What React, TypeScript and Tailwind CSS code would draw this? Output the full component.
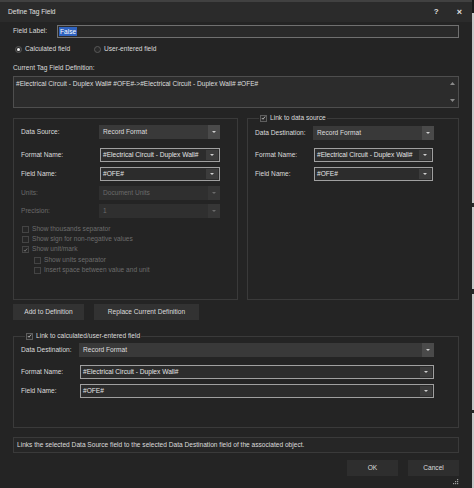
import React from "react";

const F = "font-['Liberation_Sans',Arial,sans-serif] text-[6.6px] leading-none";

function Arrow({ dim = false }: { dim?: boolean }) {
  return (
    <svg width="4" height="2" viewBox="0 0 4 2">
      <polygon points="0,0 4,0 2,2" fill={dim ? "#6a6a6a" : "#cfcfcf"} />
    </svg>
  );
}

function Select({
  text,
  kind,
  className = "",
}: {
  text: string;
  kind: "flat" | "border" | "disabled";
  className?: string;
}) {
  if (kind === "flat")
    return (
      <div className={`flex bg-[#393939] ${className}`}>
        <span className="flex-1 flex items-center px-[4px] text-[#dedede]">{text}</span>
        <span className="w-[12px] bg-[#4a4a4a] flex items-center justify-center">
          <Arrow />
        </span>
      </div>
    );
  if (kind === "disabled")
    return (
      <div className={`flex bg-[#2f2f2f] ${className}`}>
        <span className="flex-1 flex items-center px-[4px] text-[#6a6a6a]">{text}</span>
        <span className="w-[12px] bg-[#363636] flex items-center justify-center">
          <Arrow dim />
        </span>
      </div>
    );
  return (
    <div className={`flex border border-[#a0a0a0] bg-[#2c2c2c] p-[1px] ${className}`}>
      <span className="flex-1 flex items-center px-[1px] text-[#e4e4e4]">{text}</span>
      <span className="w-[12px] bg-[#3c3c3c] flex items-center justify-center">
        <Arrow />
      </span>
    </div>
  );
}

function Check({
  label,
  checked = false,
  dim = false,
  className = "",
}: {
  label: string;
  checked?: boolean;
  dim?: boolean;
  className?: string;
}) {
  return (
    <div className={`flex items-center gap-[3px] ${className}`}>
      <span
        className={`w-[7px] h-[7px] border flex items-center justify-center ${
          dim ? "border-[#444444] bg-[#262626]" : "border-[#5e5e5e] bg-[#2a2a2a]"
        }`}
      >
        {checked && (
          <svg width="6" height="6" viewBox="0 0 6 6">
            <polyline
              points="1,3 2.4,4.5 5,1.2"
              fill="none"
              stroke={dim ? "#8a8a8a" : "#dcdcdc"}
              strokeWidth="0.9"
            />
          </svg>
        )}
      </span>
      <span className={dim ? "text-[#6c6c6c]" : "text-[#dcdcdc]"}>{label}</span>
    </div>
  );
}

function Radio({ label, checked }: { label: string; checked?: boolean }) {
  return (
    <div className="flex items-center gap-[3px]">
      <span className="w-[7px] h-[7px] rounded-full border border-[#5a5a5a] bg-[#2a2a2a] flex items-center justify-center">
        {checked && <span className="w-[3px] h-[3px] rounded-full bg-[#f0f0f0]" />}
      </span>
      <span className="text-[#dcdcdc]">{label}</span>
    </div>
  );
}

function Row({
  label,
  labelW,
  dim = false,
  className = "",
  children,
}: {
  label: string;
  labelW: string;
  dim?: boolean;
  className?: string;
  children: React.ReactNode;
}) {
  return (
    <div className={`flex items-stretch ${className}`}>
      <span className={`${labelW} flex items-center ${dim ? "text-[#6a6a6a]" : "text-[#dcdcdc]"}`}>
        {label}
      </span>
      {children}
    </div>
  );
}

export default function App() {
  return (
    <div className={`w-[474px] h-[488px] flex bg-[#1c1c1c] ${F}`}>
      <div className="w-[472px] h-full flex flex-col bg-[#242424] border-t-2 border-[#414141]">
        {/* title bar */}
        <div className="h-[20px] shrink-0 flex items-center bg-[#2b2b2b] pl-[8px] pr-[10px] text-[#e0e0e0]">
          <span className="flex-1">Define Tag Field</span>
          <span className="font-bold text-[8px] w-[23px]">?</span>
          <span className="font-bold text-[9px]">×</span>
        </div>

        <div className="flex flex-col px-[13px] pr-[13px]">
          {/* field label */}
          <div className="mt-[3px] h-[13px] flex items-stretch">
            <span className="w-[44px] flex items-center text-[#dcdcdc]">Field Label:</span>
            <div className="flex-1 border border-[#707070] bg-[#2a2a2a] flex items-center px-[1px]">
              <span className="bg-[#2f63c0] text-white px-[1px] leading-[9px]">False</span>
            </div>
          </div>

          {/* radios */}
          <div className="mt-[6px] h-[10px] flex items-center pl-[2px]">
            <div className="w-[79px]">
              <Radio label="Calculated field" checked />
            </div>
            <Radio label="User-entered field" />
          </div>

          <div className="mt-[9px] h-[10px] flex items-center text-[#dcdcdc]">
            Current Tag Field Definition:
          </div>

          {/* textarea */}
          <div className="mt-[3px] h-[32px] flex border border-[#4e4e4e] bg-[#2c2c2c]">
            <div className="flex-1 px-[2px] pt-[4px] text-[#dedede]">
              #Electrical Circuit - Duplex Wall# #OFE#-&gt;#Electrical Circuit - Duplex Wall# #OFE#
            </div>
            <div className="w-[11px] flex flex-col items-center justify-between py-[5px]">
              <svg width="5" height="3" viewBox="0 0 5 3">
                <polygon points="0,3 5,3 2.5,0" fill="#8a8a8a" />
              </svg>
              <svg width="5" height="3" viewBox="0 0 5 3">
                <polygon points="0,0 5,0 2.5,3" fill="#8a8a8a" />
              </svg>
            </div>
          </div>

          {/* groups */}
          <div className="mt-[5px] h-[187px] flex gap-[9px]">
            <div className="mt-[5px] w-[225px] h-[182px] border border-[#3a3a3a] pl-[7px] pt-[6px] flex flex-col">
              <Row label="Data Source:" labelW="w-[78px]" className="h-[14px]">
                <Select text="Record Format" kind="flat" className="w-[121px]" />
              </Row>
              <Row label="Format Name:" labelW="w-[79px]" className="mt-[9px] h-[14px]">
                <Select text="#Electrical Circuit - Duplex Wall#" kind="border" className="w-[120px]" />
              </Row>
              <Row label="Field Name:" labelW="w-[79px]" className="mt-[5px] h-[14px]">
                <Select text="#OFE#" kind="border" className="w-[120px]" />
              </Row>
              <Row label="Units:" labelW="w-[78px]" dim className="mt-[5px] h-[14px]">
                <Select text="Document Units" kind="disabled" className="w-[121px]" />
              </Row>
              <Row label="Precision:" labelW="w-[78px]" dim className="mt-[4px] h-[14px]">
                <Select text="1" kind="disabled" className="w-[121px]" />
              </Row>
              <div className="mt-[6px] flex flex-col pl-[1px]">
                <Check label="Show thousands separator" dim className="h-[10.3px]" />
                <Check label="Show sign for non-negative values" dim className="h-[10.3px]" />
                <Check label="Show unit/mark" checked dim className="h-[10.3px]" />
                <Check label="Show units separator" dim className="h-[10.3px] pl-[12px]" />
                <Check label="Insert space between value and unit" dim className="h-[10.3px] pl-[12px]" />
              </div>
            </div>

            <fieldset className="w-[212px] h-[187px] border border-[#3a3a3a] pl-[7px] m-0 p-0 flex flex-col">
              <legend className="ml-[4px] px-[1px] h-[10px] flex items-center">
                <Check label="Link to data source" checked />
              </legend>
              <Row label="Data Destination:" labelW="w-[58px]" className="mt-[3px] h-[14px]">
                <Select text="Record Format" kind="flat" className="w-[121px]" />
              </Row>
              <Row label="Format Name:" labelW="w-[59px]" className="mt-[8px] h-[14px]">
                <Select text="#Electrical Circuit - Duplex Wall#" kind="border" className="w-[119px]" />
              </Row>
              <Row label="Field Name:" labelW="w-[59px]" className="mt-[5px] h-[14px]">
                <Select text="#OFE#" kind="border" className="w-[119px]" />
              </Row>
            </fieldset>
          </div>

          {/* buttons */}
          <div className="mt-[4px] h-[16px] flex gap-[10px] text-[#dcdcdc]">
            <div className="w-[71px] bg-[#323232] flex items-center justify-center">Add to Definition</div>
            <div className="w-[105px] bg-[#323232] flex items-center justify-center">
              Replace Current Definition
            </div>
          </div>

          {/* lower group */}
          <fieldset className="mt-[11px] h-[97px] border border-[#3a3a3a] pl-[7px] m-0 p-0 flex flex-col">
            <legend className="ml-[4px] px-[1px] h-[10px] flex items-center">
              <Check label="Link to calculated/user-entered field" checked />
            </legend>
            <Row label="Data Destination:" labelW="w-[58px]" className="mt-[2px] h-[14px]">
              <Select text="Record Format" kind="flat" className="w-[355px]" />
            </Row>
            <Row label="Format Name:" labelW="w-[59px]" className="mt-[8px] h-[14px]">
              <Select text="#Electrical Circuit - Duplex Wall#" kind="border" className="w-[354px]" />
            </Row>
            <Row label="Field Name:" labelW="w-[59px]" className="mt-[5px] h-[14px]">
              <Select text="#OFE#" kind="border" className="w-[354px]" />
            </Row>
          </fieldset>

          {/* description */}
          <div className="mt-[9px] h-[16px] border border-[#3a3a3a] bg-[#262626] flex items-center px-[3px] text-[#dcdcdc]">
            Links the selected Data Source field to the selected Data Destination field of the associated object.
          </div>

          {/* ok cancel */}
          <div className="mt-[7px] h-[16px] flex justify-end gap-[10px] text-[#dcdcdc]">
            <div className="w-[51px] bg-[#2e2e2e] flex items-center justify-center">OK</div>
            <div className="w-[51px] bg-[#2e2e2e] flex items-center justify-center">Cancel</div>
          </div>

          <div className="mt-[2px] flex justify-end">
            <svg width="7" height="7" viewBox="0 0 7 7">
              <rect x="5" y="1" width="1.2" height="1.2" fill="#a0a0a0" />
              <rect x="3" y="3" width="1.2" height="1.2" fill="#a0a0a0" />
              <rect x="5" y="3" width="1.2" height="1.2" fill="#a0a0a0" />
              <rect x="1" y="5" width="1.2" height="1.2" fill="#a0a0a0" />
              <rect x="3" y="5" width="1.2" height="1.2" fill="#a0a0a0" />
              <rect x="5" y="5" width="1.2" height="1.2" fill="#a0a0a0" />
            </svg>
          </div>
        </div>
      </div>

      {/* background strip on the right */}
      <div className="w-[2px] h-full flex flex-col bg-[#c9c9c9]">
        <div className="h-[13px] bg-[#1c1c1c]" />
        <div className="h-[190px]" />
        <div className="h-[4px] bg-[#2a2a2a]" />
        <div className="h-[82px]" />
        <div className="h-[5px] bg-[#2a2a2a]" />
        <div className="h-[116px]" />
        <div className="h-[3px] bg-[#2a2a2a]" />
      </div>
    </div>
  );
}
